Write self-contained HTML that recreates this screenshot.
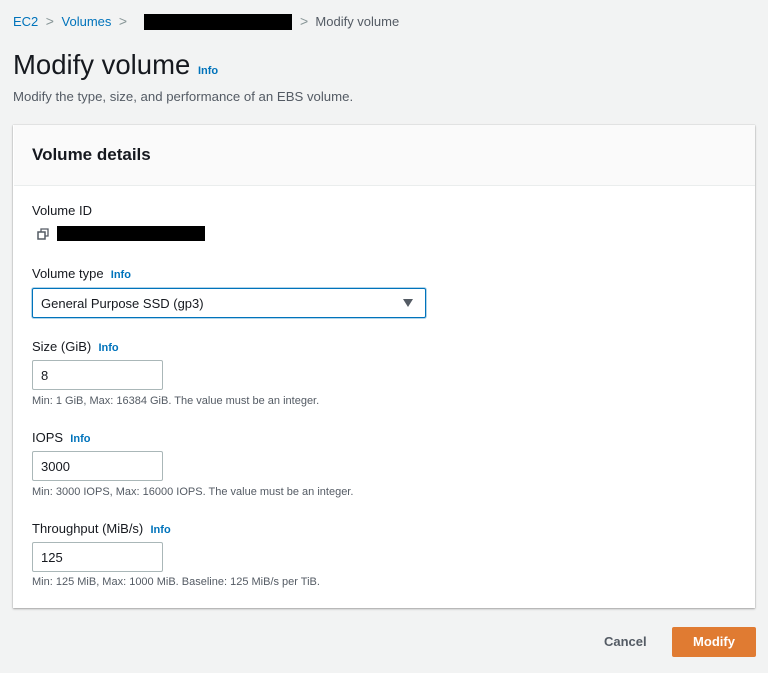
<!DOCTYPE html><html><head><style>
body{margin:0;width:768px;height:673px;background:#f2f3f3;font-family:"Liberation Sans",sans-serif;color:#16191f;position:relative;overflow:hidden}
.a{position:absolute;white-space:nowrap}
.lnk{color:#0073bb}
.info{color:#0073bb;font-weight:bold;font-size:11px}
.lbl{font-size:13px}
.inp{position:absolute;background:#fff;border:1px solid #aab7b8;border-radius:2px;box-sizing:border-box;font-size:13px;padding:0 0 0 8px;display:flex;align-items:center}
.hint{font-size:11px;color:#545b64}
.sep{color:#879596;font-size:14px}
</style></head><body>
<div class="a lbl" style="left:13px;top:13px"><span class="lnk">EC2</span> <span class="sep">&nbsp;&gt;&nbsp;</span> <span class="lnk">Volumes</span> <span class="sep">&nbsp;&gt;&nbsp;</span></div>
<div class="a" style="left:144px;top:14px;width:148px;height:16px;background:#000"></div>
<div class="a lbl" style="left:300px;top:13px;color:#545b64"><span class="sep">&gt;</span>&nbsp;&nbsp;Modify volume</div>
<div class="a" style="left:13px;top:49px;font-size:27.5px">Modify volume <span class="info" style="font-size:11px">Info</span></div>
<div class="a lbl" style="left:13px;top:89px;color:#545b64;font-size:13.2px">Modify the type, size, and performance of an EBS volume.</div>
<div class="a" style="left:13px;top:125px;width:742px;height:483px;background:#fff;box-shadow:0 1px 2px rgba(0,0,0,.3),0 0 1px rgba(0,0,0,.25)"></div>
<div class="a" style="left:14px;top:125px;width:741px;height:60px;background:#fafafa;border-bottom:1px solid #eaeded"></div>
<div class="a" style="left:32px;top:145px;font-size:17px;font-weight:bold">Volume details</div>
<div class="a lbl" style="left:32px;top:203px">Volume ID</div>
<svg class="a" style="left:37px;top:228px" width="12" height="12" viewBox="0 0 12 12"><rect x="1" y="4" width="7" height="7" fill="none" stroke="#545b64" stroke-width="1.5"/><path d="M4 4V1h7v7H8" fill="none" stroke="#545b64" stroke-width="1.3"/></svg>
<div class="a" style="left:57px;top:226px;width:148px;height:15px;background:#000"></div>
<div class="a lbl" style="left:32px;top:266px">Volume type &nbsp;<span class="info">Info</span></div>
<div class="inp" style="left:32px;top:288px;width:394px;height:30px;border:1px solid #0073bb;box-shadow:0 0 0 1px rgba(0,115,187,.3)">General Purpose SSD (gp3)<span style="position:absolute;right:12px;top:10px;width:0;height:0;border-left:5px solid transparent;border-right:5px solid transparent;border-top:8px solid #545b64"></span></div>
<div class="a lbl" style="left:32px;top:339px">Size (GiB) &nbsp;<span class="info">Info</span></div>
<div class="inp" style="left:32px;top:360px;width:131px;height:30px">8</div>
<div class="a hint" style="left:32px;top:395px">Min: 1 GiB, Max: 16384 GiB. The value must be an integer.</div>
<div class="a lbl" style="left:32px;top:430px">IOPS &nbsp;<span class="info">Info</span></div>
<div class="inp" style="left:32px;top:451px;width:131px;height:30px">3000</div>
<div class="a hint" style="left:32px;top:486px">Min: 3000 IOPS, Max: 16000 IOPS. The value must be an integer.</div>
<div class="a lbl" style="left:32px;top:521px">Throughput (MiB/s) &nbsp;<span class="info">Info</span></div>
<div class="inp" style="left:32px;top:542px;width:131px;height:30px">125</div>
<div class="a hint" style="left:32px;top:576px">Min: 125 MiB, Max: 1000 MiB. Baseline: 125 MiB/s per TiB.</div>
<div class="a" style="left:604px;top:634px;font-size:13px;font-weight:bold;color:#545b64">Cancel</div>
<div class="a" style="left:672px;top:627px;width:84px;height:30px;background:#e07b32;border-radius:2px;color:#fff;font-weight:bold;font-size:13px;text-align:center;line-height:30px">Modify</div>
</body></html>
